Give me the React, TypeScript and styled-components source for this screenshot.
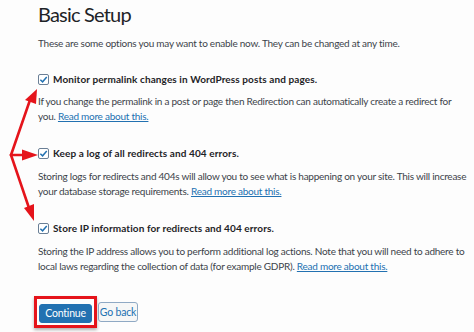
import React from "react";
import styled, { createGlobalStyle } from "styled-components";

const GlobalStyle = createGlobalStyle`
  html, body {
    margin: 0;
    padding: 0;
    background: #fdfdfd;
  }
  body {
    font-family: Lato, "Open Sans", sans-serif;
    color: #3c434a;
  }
`;

const options = [
  {
    label: "Monitor permalink changes in WordPress posts and pages.",
    lines: ["If you change the permalink in a post or page then Redirection can automatically create a redirect for", "you."],
    gap: 7,
  },
  {
    label: "Keep a log of all redirects and 404 errors.",
    lines: ["Storing logs for redirects and 404s will allow you to see what is happening on your site. This will increase", "your database storage requirements."],
    gap: 8,
  },
  {
    label: "Store IP information for redirects and 404 errors.",
    lines: ["Storing the IP address allows you to perform additional log actions. Note that you will need to adhere to", "local laws regarding the collection of data (for example GDPR)."],
    gap: 8,
  },
];

const CheckIcon = () => (
  <svg width="9" height="9" viewBox="0 0 10 10">
    <path d="M1.5 5.2 L4 7.6 L8.6 2.2" fill="none" stroke="#2271b1" strokeWidth="1.6" />
  </svg>
);

const App = () => {
  return (
    <>
      <GlobalStyle />
      <Page>
        <Title>Basic Setup</Title>
        <Intro>These are some options you may want to enable now. They can be changed at any time.</Intro>
        {options.map((o) => (
          <Option key={o.label}>
            <Label>
              <Box>
                <CheckIcon />
              </Box>
              {o.label}
            </Label>
            <Desc $gap={o.gap}>
              {o.lines[0]}
              <br />
              {o.lines[1]} <Link href="#">Read more about this.</Link>
            </Desc>
          </Option>
        ))}
        <Actions>
          <Highlight>
            <Primary>Continue</Primary>
          </Highlight>
          <Secondary>Go back</Secondary>
        </Actions>
        <Arrows width="474" height="332" viewBox="0 0 474 332">
          <g stroke="#e5141b" strokeWidth="2.6" fill="none" strokeLinecap="round">
            <line x1="11" y1="155" x2="30" y2="100" />
            <line x1="11" y1="155" x2="24" y2="155" />
            <line x1="11" y1="155" x2="29" y2="208" />
          </g>
          <g fill="#e5141b">
            <polygon points="37,89 25,100 36,104" />
            <polygon points="38,155 22,149.5 22,160.5" />
            <polygon points="34,221 24,208 34,204" />
          </g>
        </Arrows>
      </Page>
    </>
  );
};

const Page = styled.div`
  position: relative;
  width: 474px;
  height: 332px;
  box-sizing: border-box;
  padding: 1px 0 0 38px;
  overflow: hidden;
  white-space: nowrap;
`;

const Title = styled.h1`
  margin: 0;
  font-size: 20px;
  font-weight: 400;
  letter-spacing: -0.8px;
  line-height: 26px;
  color: #1d2327;
`;

const Intro = styled.p`
  margin: 9px 0 21px;
  font-size: 10px;
  letter-spacing: -0.25px;
  line-height: 15px;
`;

const Option = styled.div`
  margin-bottom: 22px;
`;

const Label = styled.label`
  display: flex;
  align-items: center;
  gap: 4px;
  font-size: 10px;
  font-weight: 700;
  letter-spacing: 0.1px;
  line-height: 15px;
  color: #1d2327;
`;

const Box = styled.span`
  display: inline-flex;
  align-items: center;
  justify-content: center;
  width: 9px;
  height: 9px;
  border: 1px solid #6a7f96;
  border-radius: 2px;
  background: #fff;
`;

const Desc = styled.p<{ $gap: number }>`
  margin: ${(p) => p.$gap}px 0 0;
  font-size: 10px;
  letter-spacing: -0.25px;
  line-height: 15px;
`;

const Link = styled.a`
  color: #2271b1;
  text-decoration: underline;
`;

const Actions = styled.div`
  display: flex;
  align-items: center;
  gap: 1px;
  margin-top: 18px;
  margin-left: -4px;
`;

const Highlight = styled.div`
  padding: 2px;
  border: 3px solid #e5141b;
  box-shadow: 0 2px 3px rgba(0, 0, 0, 0.3);
`;

const Primary = styled.button`
  height: 19px;
  width: 53px;
  padding: 0;
  font-family: inherit;
  font-size: 10.5px;
  letter-spacing: -0.2px;
  color: #fff;
  background: #2271b1;
  border: 1px solid #2271b1;
  border-radius: 3px;
`;

const Secondary = styled.button`
  height: 20px;
  width: 40px;
  padding: 0;
  font-family: inherit;
  font-size: 10.5px;
  letter-spacing: -0.2px;
  color: #2271b1;
  background: #f6f7f7;
  border: 1px solid #8fa9c4;
  border-radius: 3px;
`;

const Arrows = styled.svg`
  position: absolute;
  top: 0;
  left: 0;
  pointer-events: none;
`;

export default App;
